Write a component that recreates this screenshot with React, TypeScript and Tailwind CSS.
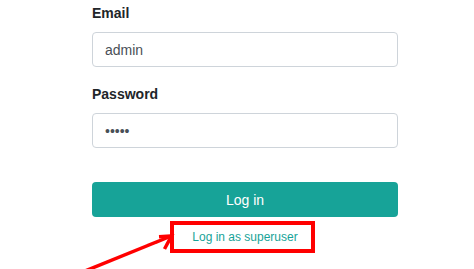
import React from "react";

export default function App() {
  return (
    <div className="relative w-[474px] h-[269px] overflow-hidden bg-white font-['Liberation_Sans',Arial,sans-serif]">
      <div className="ml-[92px] w-[306px] pt-[3px]">
        <label className="block text-[14px] leading-[21px] font-bold text-[#212529] mb-2">Email</label>
        <input
          readOnly
          value="admin"
          className="block w-full h-[35px] px-3 border border-[#ced4da] rounded-[4px] bg-white text-[14px] text-[#495057] outline-none"
        />
        <label className="block mt-[17px] text-[14px] leading-[21px] font-bold text-[#212529] mb-2">Password</label>
        <input
          readOnly
          value="•••••"
          className="block w-full h-[35px] px-3 border border-[#ced4da] rounded-[4px] bg-white text-[14px] text-[#495057] outline-none"
        />
        <button className="block mt-[34px] w-full h-[35px] rounded-[4px] bg-[#17a398] text-white text-[14px] leading-[20px]">
          Log in
        </button>
        <div className="mt-[11px] text-center text-[12px] leading-[18px] text-[#17a398]">Log in as superuser</div>
      </div>
      <div className="absolute left-[170px] top-[221px] w-[145px] h-[32px] border-4 border-[#ff0000] pointer-events-none" />
      <svg className="absolute left-0 top-0 pointer-events-none" width="474" height="269" viewBox="0 0 474 269">
        <line x1="85" y1="271" x2="170" y2="236.5" stroke="#ff0000" strokeWidth="3.5" strokeLinecap="butt" />
        <polyline points="159,236.8 171.5,236 164.5,249" fill="none" stroke="#ff0000" strokeWidth="3.5" strokeLinejoin="miter" />
      </svg>
    </div>
  );
}
